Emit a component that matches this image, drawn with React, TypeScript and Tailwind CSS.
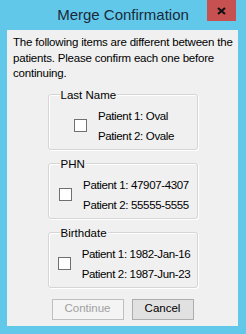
import { useState } from 'react';

const font = { fontFamily: '"Liberation Sans", Arial, sans-serif' };

interface Diff {
  label: string;
  first: string;
  second: string;
}

const diffs: Diff[] = [
  { label: 'Last Name', first: 'Oval', second: 'Ovale' },
  { label: 'PHN', first: '47907-4307', second: '55555-5555' },
  { label: 'Birthdate', first: '1982-Jan-16', second: '1987-Jun-23' },
];

function DiffGroup({ diff, checked, onToggle }: { diff: Diff; checked: boolean; onToggle: () => void }) {
  return (
    <fieldset className="mx-auto mb-[7px] w-[150px] rounded-[3px] border border-[#d5d5d5] px-1 pt-[4px] pb-[3px] shadow-[inset_1px_1px_0_#fff,1px_1px_0_#fff]">
      <legend className="ml-[7px] bg-[#f0f0f0] px-px text-[11.5px] leading-[14px] text-black">{diff.label}</legend>
      <div className="flex items-center justify-center gap-[11px] pl-[3px]">
        <button
          onClick={onToggle}
          className="flex h-[13px] w-[13px] shrink-0 items-center justify-center border border-[#707070] bg-white"
        >
          {checked && (
            <svg width="9" height="9" viewBox="0 0 9 9">
              <path d="M1 4.5 L3.5 7 L8 1.5" fill="none" stroke="#222" strokeWidth="1.6" />
            </svg>
          )}
        </button>
        <div className="whitespace-nowrap text-[11.5px] leading-[20px] tracking-[-0.35px] text-black">
          <div>Patient 1: {diff.first}</div>
          <div>Patient 2: {diff.second}</div>
        </div>
      </div>
    </fieldset>
  );
}

export default function App() {
  const [checked, setChecked] = useState<boolean[]>([false, false, false]);
  const allChecked = checked.every(Boolean);

  return (
    <div className="h-[334px] w-[246px] overflow-hidden bg-[#62c8ea] pl-[7px] pr-[8px] pb-[8px]" style={font}>
      {/* Title bar */}
      <div className="-ml-[7px] -mr-[8px] grid h-[30px] grid-cols-[1fr_auto_1fr]">
        <div />
        <div className="pt-[5px] text-[15px] leading-[20px] text-[#1b2a3a]">Merge Confirmation</div>
        <div className="flex justify-end pr-[10px]">
          <div className="flex h-[21px] w-[29px] items-center justify-center bg-[#c75050]">
            <svg width="9" height="8" viewBox="0 0 9 8">
              <path d="M1 1 L8 7 M8 1 L1 7" stroke="#111" strokeWidth="2.2" />
            </svg>
          </div>
        </div>
      </div>

      {/* Client area */}
      <div className="h-[296px] bg-[#f0f0f0] pt-[5px]">
        <p className="mb-[6px] pl-[6px] pr-[1px] text-[11.5px] leading-[15.5px] tracking-[-0.2px] text-black">
          The following items are different between the patients. Please confirm each one before continuing.
        </p>

        {diffs.map((d, i) => (
          <DiffGroup
            key={d.label}
            diff={d}
            checked={checked[i]}
            onToggle={() => setChecked((c) => c.map((v, j) => (j === i ? !v : v)))}
          />
        ))}

        <div className="mt-[11px] flex justify-center gap-[8px]">
          <button
            disabled={!allChecked}
            className="h-[21px] w-[72px] border border-[#bfbfbf] bg-[#f4f4f4] text-[11.5px] text-[#a0a0a0] enabled:border-[#adadad] enabled:bg-[#e1e1e1] enabled:text-black"
          >
            Continue
          </button>
          <button className="h-[21px] w-[62px] border border-[#adadad] bg-[#e1e1e1] text-[11.5px] text-black">
            Cancel
          </button>
        </div>
      </div>
    </div>
  );
}
